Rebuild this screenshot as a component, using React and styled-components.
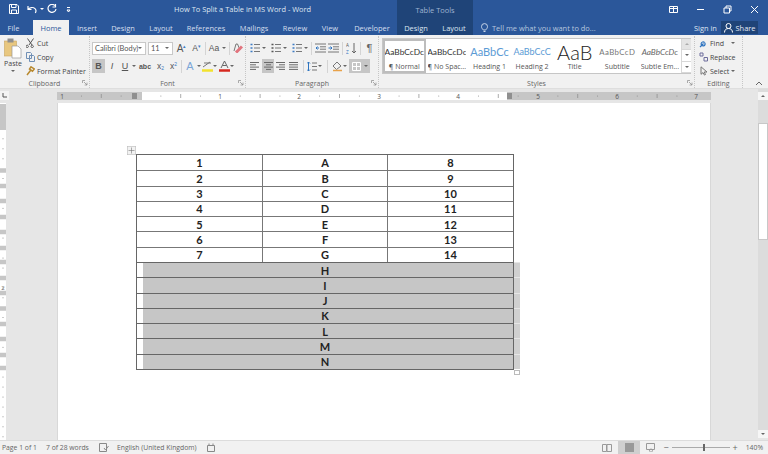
import styled, { createGlobalStyle } from "styled-components";

const GlobalStyle = createGlobalStyle`
  html, body {
    margin: 0;
    padding: 0;
    width: 768px;
    height: 454px;
    overflow: hidden;
    background: #e6e6e6;
  }
`;

const Window = styled.div`
  width: 768px;
  height: 454px;
  display: flex;
  flex-direction: column;
  font-family: "Open Sans", "Noto Sans", sans-serif;
  font-size: 7px;
  color: #444;
  overflow: hidden;
`;

const Gap = styled.span`
  width: ${(p) => p.$w}px;
  flex: none;
`;

const TitleBar = styled.div`
  height: 18px;
  flex: none;
  background: #2b579a;
  display: flex;
  align-items: center;
  color: #fff;
`;

const Qat = styled.div`
  display: flex;
  align-items: center;
  padding-left: 9px;
  gap: 3px;
  width: 174px;
  box-sizing: border-box;
`;

const DocTitle = styled.div`
  width: 223px;
  font-size: 7.45px;
  color: #dfe6f1;
  white-space: nowrap;
`;

const ContextTitle = styled.div`
  width: 76px;
  height: 18px;
  line-height: 20px;
  background: #1f4478;
  color: #9fb4d2;
  text-align: center;
  font-size: 7.45px;
`;

const WindowControls = styled.div`
  margin-left: auto;
  display: flex;
  align-items: center;
  gap: 18px;
  padding-right: 9px;
`;

const TabRow = styled.div`
  height: 17px;
  flex: none;
  background: #2b579a;
  display: flex;
  align-items: flex-end;
`;

const Tab = styled.div`
  height: ${(p) => (p.$active ? "15px" : "17px")};
  line-height: ${(p) => (p.$active ? "16px" : "20px")};
  width: ${(p) => p.$w}px;
  flex: none;
  box-sizing: border-box;
  padding-right: ${(p) => p.$trim || 0}px;
  text-align: center;
  font-size: 7.45px;
  background: ${(p) => (p.$active ? "#f1f1f1" : p.$context ? "#1f4478" : "transparent")};
  color: ${(p) => (p.$active ? "#2b579a" : p.$context ? "#dbe4f1" : "#d5dfee")};
  white-space: nowrap;
`;

const TellMe = styled.div`
  display: flex;
  align-items: center;
  gap: 4px;
  height: 17px;
  padding: 3px 0 0 8px;
  width: 221px;
  box-sizing: border-box;
  color: #b6c6de;
  font-size: 7.45px;
  white-space: nowrap;
`;

const SignIn = styled.div`
  width: 27px;
  font-size: 7.45px;
  line-height: 20px;
  height: 17px;
  color: #dbe4f1;
`;

const ShareButton = styled.div`
  width: 37px;
  height: 13px;
  margin-bottom: 1px;
  background: #1f4478;
  display: flex;
  align-items: center;
  justify-content: center;
  gap: 3px;
  color: #e6ecf5;
  font-size: 7.45px;
`;

const Ribbon = styled.div`
  height: 54px;
  box-sizing: border-box;
  flex: none;
  background: #f1f1f1;
  display: flex;
  position: relative;
  border-bottom: 1px solid #dedede;
`;

const Group = styled.div`
  width: ${(p) => p.$w}px;
  flex: none;
  box-sizing: border-box;
  border-right: 1px dotted #c6c6c6;
  margin-top: 1px;
  display: flex;
  flex-direction: column;
  position: relative;
`;

const GroupBody = styled.div`
  height: 43px;
  display: flex;
  padding-left: ${(p) => p.$pad || 0}px;
`;

const GroupLabel = styled.div`
  text-align: center;
  color: #666;
  font-size: 7px;
  line-height: 9px;
`;

const Launcher = styled.svg`
  position: absolute;
  right: 1px;
  bottom: 2px;
  width: 6px;
  height: 6px;
`;

const PasteColumn = styled.div`
  width: 26px;
  flex: none;
  display: flex;
  flex-direction: column;
  align-items: center;
  padding-top: 2px;
  font-size: 7px;
  line-height: 9px;
`;

const ActionColumn = styled.div`
  display: flex;
  flex-direction: column;
  padding-left: ${(p) => p.$pad || 0}px;
`;

const ActionItem = styled.div`
  height: 14px;
  display: flex;
  align-items: center;
  gap: 2px;
  font-size: 7px;
  white-space: nowrap;
`;

const ToolStack = styled.div`
  display: flex;
  flex-direction: column;
  gap: 4px;
  padding-top: 5px;
`;

const ToolRow = styled.div`
  display: flex;
  align-items: center;
  height: 14px;
  gap: ${(p) => p.$gap ?? 2}px;
`;

const Combo = styled.div`
  width: ${(p) => p.$w}px;
  height: 13px;
  box-sizing: border-box;
  border: 1px solid #c8c8c8;
  background: #fff;
  font-family: Lato, "Open Sans", sans-serif;
  font-size: 7.4px;
  line-height: 11px;
  padding-left: 2px;
  color: #555;
  position: relative;
  white-space: nowrap;
  &::after {
    content: "";
    position: absolute;
    right: 3px;
    top: 4px;
    border: 2px solid transparent;
    border-top: 2.5px solid #666;
  }
`;

const ToolBox = styled.div`
  width: ${(p) => p.$w || 13}px;
  height: 14px;
  flex: none;
  display: flex;
  align-items: center;
  justify-content: center;
  background: ${(p) => (p.$on ? "#c6c6c6" : "transparent")};
  color: ${(p) => p.$color || "#555"};
  font-family: "Liberation Sans", sans-serif;
  font-size: ${(p) => p.$size || 9}px;
  font-weight: ${(p) => (p.$bold ? 700 : 400)};
  font-style: ${(p) => (p.$italic ? "italic" : "normal")};
  text-decoration: ${(p) => (p.$under ? "underline" : "none")};
`;

const Mark = styled.span`
  font-size: 5px;
  color: #3e7cc4;
  align-self: ${(p) => (p.$low ? "flex-end" : "flex-start")};
  margin-top: ${(p) => (p.$low ? 0 : 2)}px;
  margin-bottom: ${(p) => (p.$low ? 2 : 0)}px;
`;

const Caret = styled.span`
  width: 0;
  height: 0;
  flex: none;
  border: 2px solid transparent;
  border-top: 2.5px solid ${(p) => p.$color || "#666"};
  margin-top: 2px;
  transform: ${(p) => (p.$up ? "translateY(-2px) rotate(180deg)" : "none")};
`;

const ToolDivider = styled.span`
  width: 1px;
  height: 13px;
  flex: none;
  background: #d4d4d4;
  margin: 0 ${(p) => p.$m ?? 3}px;
`;

const Gallery = styled.div`
  margin: 2px 0 0 3px;
  width: 309px;
  height: 36px;
  box-sizing: border-box;
  border: 1px solid #c6c6c6;
  background: #fff;
  display: flex;
`;

const StyleItem = styled.div`
  width: 42.6px;
  flex: none;
  box-sizing: border-box;
  border: 2px solid ${(p) => (p.$active ? "#bdbdbd" : "transparent")};
  display: flex;
  flex-direction: column;
  align-items: center;
  overflow: hidden;
`;

const StylePreview = styled.div`
  height: 21px;
  width: 100%;
  display: flex;
  align-items: center;
  justify-content: center;
  white-space: nowrap;
  font-family: Lato, "Open Sans", sans-serif;
  font-size: ${(p) => p.$size || 8.4}px;
  font-weight: ${(p) => p.$weight || 400};
  font-style: ${(p) => (p.$italic ? "italic" : "normal")};
  color: ${(p) => p.$color || "#333"};
  letter-spacing: ${(p) => p.$track || 0}px;
`;

const StyleName = styled.div`
  font-size: 7px;
  line-height: 9px;
  color: #555;
  white-space: nowrap;
`;

const GalleryScroll = styled.div`
  margin-left: auto;
  width: 9px;
  flex: none;
  display: flex;
  flex-direction: column;
  border-left: 1px solid #d8d8d8;
`;

const GalleryButton = styled.div`
  flex: 1;
  display: flex;
  align-items: center;
  justify-content: center;
  background: ${(p) => (p.$muted ? "#e4e4e4" : "#fff")};
  border-bottom: 1px solid #d8d8d8;
`;

const CollapseArrow = styled.svg`
  position: absolute;
  right: 5px;
  bottom: 2px;
  width: 8px;
  height: 5px;
`;

const Body = styled.div`
  flex: 1;
  min-height: 0;
  display: flex;
  background: #e6e6e6;
`;

const MainColumn = styled.div`
  flex: 1;
  min-width: 0;
  display: flex;
  flex-direction: column;
`;

const RulerRow = styled.div`
  height: 14px;
  flex: none;
  display: flex;
  align-items: flex-start;
  padding-top: 2px;
  box-sizing: border-box;
`;

const TabStop = styled.div`
  width: 9px;
  height: 9px;
  flex: none;
  background: #f3f3f3;
  display: flex;
  align-items: center;
  justify-content: center;
`;

const TopRuler = styled.svg`
  margin: 1px 0 0 48px;
  display: block;
  flex: none;
`;

const Workspace = styled.div`
  flex: 1;
  min-height: 0;
  display: flex;
`;

const SideRuler = styled.svg`
  width: 6px;
  height: 337px;
  flex: none;
  display: block;
`;

const PageArea = styled.div`
  flex: 1;
  padding-left: 51px;
`;

const Page = styled.div`
  width: 654px;
  height: 100%;
  box-sizing: border-box;
  background: #fff;
  border-left: 1px solid #d8d8d8;
  border-right: 1px solid #d8d8d8;
  padding: 51px 0 0 78px;
`;

const TableFrame = styled.div`
  position: relative;
  width: 378px;
  height: 216px;
  display: grid;
  grid-template-rows: repeat(14, 1fr);
  box-sizing: border-box;
  border: 1px solid #666;
  border-bottom-width: 1.5px;
  font-family: Lato, "Open Sans", sans-serif;
  font-weight: 700;
  font-size: 11px;
  color: #222;
`;

const MoveHandle = styled.svg`
  position: absolute;
  left: -10px;
  top: -9px;
  width: 9px;
  height: 9px;
`;

const ResizeHandle = styled.div`
  position: absolute;
  right: -7px;
  bottom: -6px;
  width: 4px;
  height: 3px;
  border: 1px solid #bbb;
  background: #fff;
`;

const Row = styled.div`
  display: grid;
  grid-template-columns: 125px 125px 1fr;
  border-top: ${(p) => (p.$first ? "none" : "1px solid #777")};
  min-height: 0;
`;

const Cell = styled.div`
  display: flex;
  align-items: center;
  justify-content: center;
  border-left: ${(p) => (p.$lead ? "none" : "1px solid #777")};
`;

const MergedRow = styled.div`
  border-top: 1.5px solid #666;
  background: #c6c6c6;
  display: flex;
  align-items: center;
  justify-content: center;
  position: relative;
  min-height: 0;
  box-shadow: inset 6px 0 0 #fff;
  &::after {
    content: "";
    position: absolute;
    left: 100%;
    top: -1px;
    bottom: 0;
    margin-left: 1px;
    width: 6px;
    background: #d0d0d0;
    border-top: 1px solid #e6e6e6;
  }
`;

const Scrollbar = styled.div`
  width: 10px;
  flex: none;
  padding-top: 3px;
  display: flex;
  flex-direction: column;
  background: #dcdcdc;
`;

const ScrollButton = styled.div`
  height: 8px;
  flex: none;
  background: #f6f6f6;
  display: flex;
  align-items: center;
  justify-content: center;
`;

const ScrollThumb = styled.div`
  margin-top: 23px;
  height: 117px;
  flex: none;
  box-sizing: border-box;
  border: 1px solid #c8c8c8;
  background: #fff;
`;

const ScrollGap = styled.div`
  flex: 1;
`;

const ScrollFoot = styled.div`
  height: 2px;
  flex: none;
  background: #e6e6e6;
`;

const StatusBar = styled.div`
  height: 14px;
  flex: none;
  box-sizing: border-box;
  background: #f1f1f1;
  border-top: 1px solid #dcdcdc;
  display: flex;
  align-items: center;
  padding-left: 2px;
  font-size: 6.8px;
  color: #666;
  white-space: nowrap;
`;

const StatusText = styled.span`
  width: ${(p) => p.$w}px;
  flex: none;
`;

const StatusSpring = styled.span`
  flex: 1;
`;

const ViewButton = styled.div`
  width: 22px;
  height: 13px;
  flex: none;
  display: flex;
  align-items: center;
  justify-content: center;
  background: ${(p) => (p.$on ? "#cfcfcf" : "transparent")};
`;

const ZoomSlider = styled.div`
  display: flex;
  align-items: center;
  gap: 3px;
  margin-left: 1px;
  color: #666;
  font-size: 9px;
`;

const ZoomTrack = styled.div`
  width: 58px;
  height: 1px;
  background: #aaa;
  position: relative;
`;

const ZoomKnob = styled.div`
  position: absolute;
  left: 31px;
  top: -3px;
  width: 2px;
  height: 7px;
  background: #666;
`;

const ZoomValue = styled.span`
  margin-left: 8px;
  padding-right: 5px;
  color: #666;
`;

const Launch = () => (
  <Launcher viewBox="0 0 6 6" fill="none" stroke="#8a8a8a" strokeWidth=".7">
    <path d="M.5 3V.5H3M2 2l3 3M5 2.6V5H2.6" />
  </Launcher>
);

const Ico = ({ w = 10, h = 10, children, stroke = "#666" }) => (
  <svg width={w} height={h} viewBox={`0 0 ${w} ${h}`} fill="none" stroke={stroke} strokeWidth="1" style={{ flex: "none", display: "block" }}>
    {children}
  </svg>
);

const Lines = ({ rows }) => (
  <Ico w={9} h={10} stroke="#6a6a6a">
    {rows.map(([a, b], i) => (
      <path key={i} d={`M${a} ${1.5 + i * 2.3}H${b}`} />
    ))}
  </Ico>
);

const ListIcon = ({ blue }) => (
  <Ico w={10} h={10}>
    <path d="M4 1.5h6M4 5h6M4 8.5h6" stroke="#777" />
    <path d="M.5 1.5h2M.5 5h2M.5 8.5h2" stroke={blue ? "#3e7cc4" : "#555"} strokeWidth="1.4" />
  </Ico>
);

const IndentIcon = ({ flip }) => (
  <Ico w={11} h={10}>
    <path d="M0 1h11M5 3.8h6M5 6.2h6M0 9h11" stroke="#777" />
    <path d={flip ? "M.5 5h3M2.5 3.5 4 5 2.5 6.5" : "M4 5H1M2.5 3.5 1 5l1.5 1.5"} stroke="#2e74c0" />
  </Ico>
);

const tabs = [
  ["Insert", 36],
  ["Design", 36],
  ["Layout", 40],
  ["References", 50],
  ["Mailings", 46],
  ["Review", 36],
  ["View", 34],
  ["Developer", 50],
];

const rulerTicks = [];
for (let i = -3; i <= 28; i++) {
  const x = 84 + i * 19.85;
  if (i % 4 !== 0 && x > 0 && x < 654) rulerTicks.push({ x, half: i % 2 === 0 });
}
const rulerNumbers = [
  [5, "1"], [163, "1"], [242, "2"], [322, "3"], [401, "4"], [481, "5"], [560, "6"], [639, "7"],
];

const bandRows = [67.5, 83, 98, 114, 129, 145, 159, 175, 190, 205.5, 221, 236, 252, 265];
const sideTicks = [];
for (let y = 6; y < 337; y += 9.93) {
  if (y > 27 && !bandRows.some((b) => Math.abs(b - y) < 4)) sideTicks.push(y);
}

const upperRows = [
  ["1", "A", "8"], ["2", "B", "9"], ["3", "C", "10"], ["4", "D", "11"],
  ["5", "E", "12"], ["6", "F", "13"], ["7", "G", "14"],
];
const lowerRows = ["H", "I", "J", "K", "L", "M", "N"];

const galleryStyles = [
  { name: "¶ Normal", text: "AaBbCcDc", active: true },
  { name: "¶ No Spac...", text: "AaBbCcDc" },
  { name: "Heading 1", text: "AaBbCc", size: 11, color: "#5b9bd5" },
  { name: "Heading 2", text: "AaBbCcC", size: 9, color: "#5b9bd5" },
  { name: "Title", text: "AaB", size: 20, weight: 300, color: "#222" },
  { name: "Subtitle", text: "AaBbCcD", size: 7.8, color: "#777", track: 0.4 },
  { name: "Subtle Em...", text: "AaBbCcDc", size: 8.2, italic: true, color: "#666" },
];

export default function App() {
  return (
    <>
      <GlobalStyle />
      <Window>
        <TitleBar>
          <Qat>
            <Ico w={10} h={10} stroke="#fff">
              <path d="M.5.5H8L9.5 2v7.5H.5zM2.5.5v3H7v-3M2.5 9.5V6h5v3.5" />
            </Ico>
            <Gap $w={2} />
            <Ico w={10} h={9} stroke="#fff">
              <path d="M1 1v3.5h3.5M1.2 4.3C2.500 2.400 6 1.800 8 3.600c1.200 1.200 1 3.200.3 4.400" strokeWidth="1.2" />
            </Ico>
            <Caret $color="#fff" />
            <Ico w={10} h={10} stroke="#fff">
              <path d="M7.8 1.5A4 4 0 1 0 9 5M8.5 0v3h-3" strokeWidth="1.2" />
            </Ico>
            <Gap $w={3} />
            <Ico w={5} h={7} stroke="#fff">
              <path d="M1 1.5h3M1 4h3L2.5 6z" />
            </Ico>
          </Qat>
          <DocTitle>How To Split a Table in MS Word - Word</DocTitle>
          <ContextTitle>Table Tools</ContextTitle>
          <WindowControls>
            <Ico w={9} h={7} stroke="#fff">
              <path d="M.5.5h8v6h-8zM4.5.5v6M.5 2.5h8" />
            </Ico>
            <Ico w={9} h={9} stroke="#fff">
              <path d="M1 4.5h7" />
            </Ico>
            <Ico w={9} h={9} stroke="#fff">
              <path d="M1 3h5.5v5H1zM3 3V1h5v5H6.5" />
            </Ico>
            <Ico w={9} h={9} stroke="#fff">
              <path d="M1 1l7 7M8 1 1 8" />
            </Ico>
          </WindowControls>
        </TitleBar>

        <TabRow>
          <Tab $w={33} $trim={6}>File</Tab>
          <Tab $w={36} $active>Home</Tab>
          {tabs.map(([t, w]) => (
            <Tab key={t} $w={w}>{t}</Tab>
          ))}
          <Tab $w={38} $context>Design</Tab>
          <Tab $w={38} $context>Layout</Tab>
          <TellMe>
            <Ico w={7} h={10} stroke="#c9d6e8">
              <path d="M2.3 7C1.6 5.9.5 5.2.5 3.6a3 3 0 0 1 6 0C6.500 5.200 5.400 5.900 4.700 7zM2.5 8.5h2" />
            </Ico>
            Tell me what you want to do...
          </TellMe>
          <SignIn>Sign in</SignIn>
          <ShareButton>
            <Ico w={9} h={10} stroke="#fff">
              <path d="M4.5 5.500a2.300 2.300 0 1 0 0-5 2.300 2.300 0 0 0 0 5zM.5 9.500c0-2.500 1.500-4 4-4s4 1.500 4 4" />
            </Ico>
            Share
          </ShareButton>
        </TabRow>

        <Ribbon>
          <Group $w={90}>
            <GroupBody>
              <PasteColumn>
                <svg width="18" height="21" viewBox="0 0 18 21">
                  <rect x=".5" y="3" width="12" height="15" fill="#e8c77f" stroke="#c9a560" strokeWidth=".6" />
                  <rect x="3.5" y=".5" width="6" height="4" fill="#8f8f8f" />
                  <path d="M8 8h6l3 3v9H8z" fill="#fff" stroke="#999" strokeWidth=".7" />
                </svg>
                Paste
                <Caret />
              </PasteColumn>
              <ActionColumn>
                <ActionItem>
                  <Ico w={9} h={10} stroke="#555">
                    <path d="M1.5.5 6 7M7.5.5 3 7M2 7.5a1.200 1.200 0 1 0 .1.100M7 7.500a1.200 1.200 0 1 0 .1.100" />
                  </Ico>
                  Cut
                </ActionItem>
                <ActionItem>
                  <Ico w={9} h={10} stroke="#6f8fb5">
                    <path d="M.5.5h4l1 1v5h-5zM3.500 3.500h4l1 1v5h-5z" />
                  </Ico>
                  Copy
                </ActionItem>
                <ActionItem>
                  <Ico w={9} h={10} stroke="#b8892f">
                    <path d="M5 .8 8.300 3 6.500 5.200 3.500 3zM4.500 4.500 1 9" strokeWidth="1.5" />
                  </Ico>
                  Format Painter
                </ActionItem>
              </ActionColumn>
            </GroupBody>
            <GroupLabel>Clipboard</GroupLabel>
            <Launch />
          </Group>

          <Group $w={156}>
            <GroupBody $pad={2}>
              <ToolStack>
                <ToolRow>
                  <Combo $w={54}>Calibri (Body)</Combo>
                  <Combo $w={25}>11</Combo>
                  <ToolBox $w={13} $size={10}>A<Mark>▴</Mark></ToolBox>
                  <ToolBox $w={13} $size={8.5}>A<Mark>▾</Mark></ToolBox>
                  <ToolDivider $m={0} />
                  <ToolBox $w={12} $size={8.5}>Aa</ToolBox>
                  <Caret />
                  <ToolDivider $m={1} />
                  <Ico w={10} h={10}>
                    <path d="M1 8 3 1h1.500L7 7" stroke="#777" />
                    <path d="M3 9.500 9 3.500" stroke="#e2747e" strokeWidth="3" />
                  </Ico>
                </ToolRow>
                <ToolRow $gap={0}>
                  <ToolBox $on $bold $size={9}>B</ToolBox>
                  <ToolBox $italic $size={9} $w={14}>I</ToolBox>
                  <ToolBox $under $size={9} $w={12}>U</ToolBox>
                  <Gap $w={1} />
                  <Caret />
                  <ToolBox $w={18} $size={7} $bold>abc</ToolBox>
                  <ToolBox $w={13} $size={8.5}>x<Mark $low>2</Mark></ToolBox>
                  <ToolBox $w={13} $size={8.5}>x<Mark>2</Mark></ToolBox>
                  <ToolDivider $m={1} />
                  <ToolBox $w={14} $size={11} $color="#7aa6d8">A</ToolBox>
                  <Caret />
                  <Gap $w={1} />
                  <Ico w={11} h={12}>
                    <path d="M2 3h7" stroke="#777" />
                    <path d="M1 7 8 2" stroke="#777" />
                    <path d="M0 10.500h11" stroke="#f2e22e" strokeWidth="2.5" />
                  </Ico>
                  <Caret />
                  <Gap $w={2} />
                  <Ico w={11} h={12}>
                    <path d="M2 8 5.500 1 9 8M3.500 5.500h4" stroke="#666" />
                    <path d="M0 10.500h11" stroke="#d6281f" strokeWidth="2.5" />
                  </Ico>
                  <Caret />
                </ToolRow>
              </ToolStack>
            </GroupBody>
            <GroupLabel>Font</GroupLabel>
            <Launch />
          </Group>

          <Group $w={133}>
            <GroupBody $pad={4}>
              <ToolStack>
                <ToolRow>
                  <ListIcon blue />
                  <Caret />
                  <Gap $w={1} />
                  <ListIcon />
                  <Caret />
                  <Gap $w={1} />
                  <ListIcon blue />
                  <Caret />
                  <ToolDivider $m={1} />
                  <IndentIcon />
                  <IndentIcon flip />
                  <ToolDivider $m={1} />
                  <Ico w={11} h={13} stroke="#666">
                    <text x="0" y="5" fontSize="4.6" fill="#555" stroke="none" fontFamily="Open Sans">A</text>
                    <text x="0" y="12" fontSize="4.6" fill="#2e74c0" stroke="none" fontFamily="Open Sans">Z</text>
                    <path d="M8 1v10M6 9l2 2 2-2" />
                  </Ico>
                  <ToolDivider $m={1} />
                  <ToolBox $w={11} $size={11} $color="#666">¶</ToolBox>
                </ToolRow>
                <ToolRow $gap={0}>
                  <Lines rows={[[0, 9], [0, 6], [0, 9], [0, 6]]} />
                  <Gap $w={3} />
                  <ToolBox $on $w={12}><Lines rows={[[0, 9], [2, 7], [0, 9], [2, 7]]} /></ToolBox>
                  <Gap $w={2} />
                  <Lines rows={[[0, 9], [3, 9], [0, 9], [3, 9]]} />
                  <Gap $w={4} />
                  <Lines rows={[[0, 9], [0, 9], [0, 9], [0, 9]]} />
                  <Gap $w={5} />
                  <ToolDivider $m={0} />
                  <Gap $w={3} />
                  <Ico w={10} h={11}>
                    <path d="M1.500 1v9M0 2.500 1.500 1 3 2.500M0 8.500 1.500 10 3 8.500" stroke="#2e74c0" />
                    <path d="M5 2h5M5 5.500h5M5 9h5" stroke="#777" />
                  </Ico>
                  <Gap $w={1} />
                  <Caret />
                  <Gap $w={5} />
                  <ToolDivider $m={0} />
                  <Gap $w={4} />
                  <Ico w={11} h={11}>
                    <path d="M5 1 1 5l3.500 3.500L9 5z" stroke="#777" />
                    <path d="M1 9.500h9" stroke="#e8a24a" strokeWidth="1.5" />
                  </Ico>
                  <Caret />
                  <Gap $w={2} />
                  <ToolBox $on $w={21}>
                    <Ico w={9} h={9} stroke="#fff">
                      <path d="M.5.5h8v8h-8zM4.500.5v8M.5 4.500h8" />
                    </Ico>
                    <Gap $w={3} />
                    <Caret />
                  </ToolBox>
                </ToolRow>
              </ToolStack>
            </GroupBody>
            <GroupLabel>Paragraph</GroupLabel>
            <Launch />
          </Group>

          <Group $w={316}>
            <GroupBody>
              <Gallery>
                {galleryStyles.map((s) => (
                  <StyleItem key={s.name} $active={s.active}>
                    <StylePreview $size={s.size} $color={s.color} $italic={s.italic} $track={s.track} $weight={s.weight}>
                      {s.text}
                    </StylePreview>
                    <StyleName>{s.name}</StyleName>
                  </StyleItem>
                ))}
                <GalleryScroll>
                  <GalleryButton $muted><Caret $up $color="#aaa" /></GalleryButton>
                  <GalleryButton><Caret /></GalleryButton>
                  <GalleryButton><Caret /></GalleryButton>
                </GalleryScroll>
              </Gallery>
            </GroupBody>
            <GroupLabel>Styles</GroupLabel>
            <Launch />
          </Group>

          <Group $w={48}>
            <GroupBody>
              <ActionColumn $pad={4}>
                <ActionItem>
                  <Ico w={9} h={10} stroke="#2e74c0">
                    <path d="M5.500 4.500a2 2 0 1 0 .1.100M4.500 5.500 1 9" strokeWidth="1.2" />
                  </Ico>
                  Find
                  <Gap $w={3} />
                  <Caret />
                </ActionItem>
                <ActionItem>
                  <Ico w={9} h={10} stroke="#6c6c9c">
                    <path d="M1 1h3v3H1zM5 5.500h3.500V9H5z" />
                  </Ico>
                  Replace
                </ActionItem>
                <ActionItem>
                  <Ico w={9} h={10} stroke="#777">
                    <path d="M2 .8v7.500l2-1.700 1.500 2.500 1-.6L5.200 6H8z" />
                  </Ico>
                  Select
                  <Caret />
                </ActionItem>
              </ActionColumn>
            </GroupBody>
            <GroupLabel>Editing</GroupLabel>
          </Group>

          <CollapseArrow viewBox="0 0 8 5" fill="none" stroke="#666">
            <path d="M1 4l3-3 3 3" />
          </CollapseArrow>
        </Ribbon>

        <Body>
          <MainColumn>
            <RulerRow>
              <TabStop>
                <Ico w={5} h={5} stroke="#555"><path d="M1 0v4h4" /></Ico>
              </TabStop>
              <TopRuler width="654" height="8" viewBox="0 0 654 8">
                <rect width="654" height="8" fill="#c6c6c6" />
                <rect x="85" width="365" height="8" fill="#fff" />
                {rulerTicks.map((t) =>
                  t.half ? (
                    <path key={t.x} d={`M${t.x} 2v4`} stroke="#888" strokeWidth=".7" />
                  ) : (
                    <circle key={t.x} cx={t.x} cy="4" r=".5" fill="#888" />
                  )
                )}
                {rulerNumbers.map(([x, n], i) => (
                  <text key={i} x={x} y="6.5" fontSize="6.5" fill="#555" textAnchor="middle" fontFamily="Open Sans">
                    {n}
                  </text>
                ))}
                <rect x="75" y="1" width="5" height="6" fill="#8f8f8f" />
                <rect x="450" y="1" width="5" height="6" fill="#8f8f8f" />
              </TopRuler>
            </RulerRow>
            <Workspace>
              <SideRuler viewBox="0 0 6 337">
                <rect width="6" height="337" fill="#fff" />
                <rect y="1" width="6" height="26" fill="#c6c6c6" />
                {bandRows.map((y) => (
                  <rect key={y} y={y - 2.25} width="6" height="4.5" fill="#c6c6c6" />
                ))}
                {sideTicks.map((y) => (
                  <circle key={y} cx="3" cy={y} r=".5" fill="#777" />
                ))}
                <text x="3" y="187" fontSize="6" fill="#666" textAnchor="middle" fontFamily="Open Sans">2</text>
              </SideRuler>
              <PageArea>
                <Page>
                  <TableFrame>
                    <MoveHandle viewBox="0 0 9 9" fill="#f2f2f2" stroke="#777" strokeWidth=".6">
                      <rect x=".3" y=".3" width="8.4" height="8.4" stroke="#bbb" />
                      <path d="M4.5 1.5v6M1.5 4.5h6" />
                    </MoveHandle>
                    {upperRows.map((r, i) => (
                      <Row key={r[0]} $first={i === 0}>
                        {r.map((c, j) => (
                          <Cell key={c} $lead={j === 0}>{c}</Cell>
                        ))}
                      </Row>
                    ))}
                    {lowerRows.map((c) => (
                      <MergedRow key={c}>{c}</MergedRow>
                    ))}
                    <ResizeHandle />
                  </TableFrame>
                </Page>
              </PageArea>
            </Workspace>
          </MainColumn>
          <Scrollbar>
            <ScrollButton>
              <Caret $up />
            </ScrollButton>
            <ScrollThumb />
            <ScrollGap />
            <ScrollButton>
              <Caret />
            </ScrollButton>
            <ScrollFoot />
          </Scrollbar>
        </Body>

        <StatusBar>
          <StatusText $w={44}>Page 1 of 1</StatusText>
          <StatusText $w={53}>7 of 28 words</StatusText>
          <StatusText $w={18}>
            <Ico w={10} h={9}><path d="M.5.5h7v8h-7zM5 5l1.500 2 3-4" stroke="#888" /></Ico>
          </StatusText>
          <StatusText $w={90}>English (United Kingdom)</StatusText>
          <Ico w={8} h={9}><path d="M.5 2.500h7v6h-7zM2 .5v2M6 .5v2" stroke="#888" /></Ico>
          <StatusSpring />
          <ViewButton>
            <Ico w={10} h={8}><path d="M.5.5h4v7h-4zM5 .5h4.500v7H5z" stroke="#999" /></Ico>
          </ViewButton>
          <ViewButton $on>
            <Ico w={9} h={9}><rect x=".5" y=".5" width="8" height="8" fill="#999" stroke="#999" /></Ico>
          </ViewButton>
          <ViewButton>
            <Ico w={10} h={9}><path d="M.5.5h8v6h-8zM6 6.500a1.500 1.500 0 1 0 .1.100" stroke="#999" /></Ico>
          </ViewButton>
          <ZoomSlider>
            −
            <ZoomTrack><ZoomKnob /></ZoomTrack>
            +
          </ZoomSlider>
          <ZoomValue>140%</ZoomValue>
        </StatusBar>
      </Window>
    </>
  );
}
